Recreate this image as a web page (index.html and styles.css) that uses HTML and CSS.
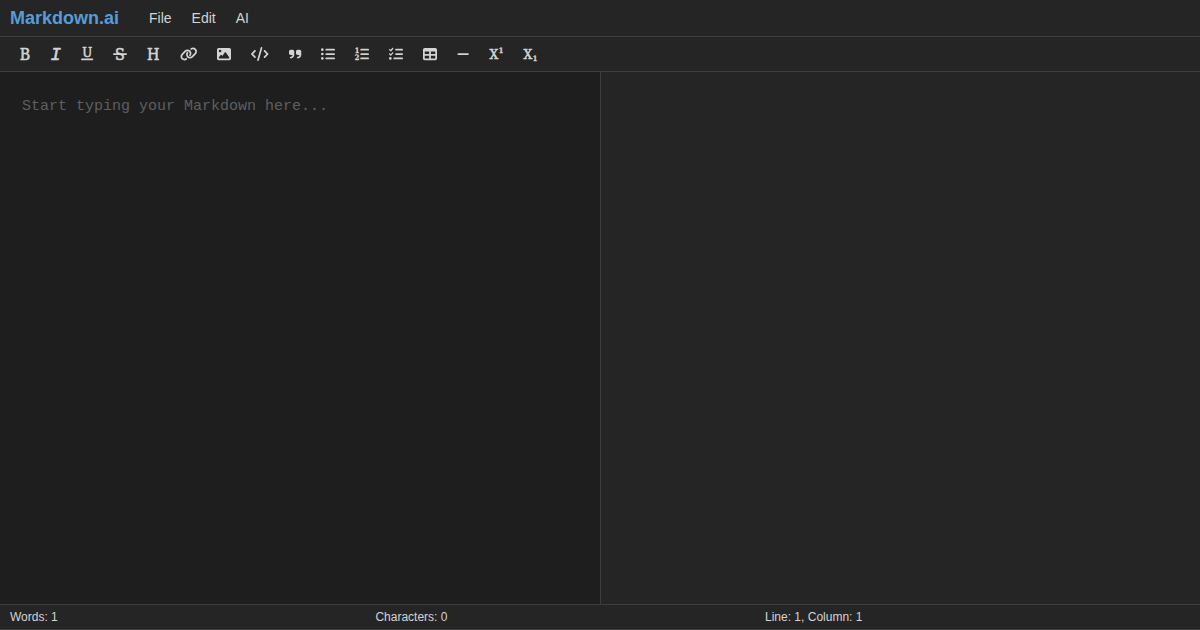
FILE: index.html
```html
<!DOCTYPE html>
<html lang="en">
<head>
    <meta charset="UTF-8">
    <meta name="viewport" content="width=device-width, initial-scale=1.0">
    <title>Markdown.ai</title>
    <link rel="stylesheet" href="styles.css">
</head>
<body>
    <header class="menu-bar">
        <div class="logo">Markdown.ai</div>
        <nav class="menu">
            <button type="button">File</button>
            <button type="button">Edit</button>
            <button type="button">AI</button>
        </nav>
    </header>

    <div class="toolbar" role="toolbar" aria-label="Formatting">
        <button type="button" title="Bold">
            <svg viewBox="0 0 384 512"><text x="186" y="464" font-size="580">B</text></svg>
        </button>
        <button type="button" title="Italic">
            <svg viewBox="0 0 384 512"><text class="italic" x="176" y="464" font-size="640">I</text></svg>
        </button>
        <button type="button" title="Underline">
            <svg viewBox="0 0 448 512"><text x="224" y="360" font-size="480">U</text><rect y="416" width="448" height="64" rx="32"/></svg>
        </button>
        <button type="button" title="Strikethrough">
            <svg viewBox="0 0 512 512"><text x="256" y="464" font-size="580">S</text><rect y="224" width="512" height="64" rx="32"/></svg>
        </button>
        <button type="button" title="Heading">
            <svg viewBox="0 0 448 512"><text x="224" y="464" font-size="580">H</text></svg>
        </button>
        <button type="button" title="Link">
            <svg viewBox="0 0 640 512"><path d="M579.8 267.7c56.5-56.5 56.5-148 0-204.5c-50-50-128.8-56.5-186.3-15.4l-1.6 1.1c-14.4 10.3-17.7 30.3-7.4 44.6s30.3 17.7 44.6 7.4l1.6-1.1c32.1-22.9 76-19.3 103.8 8.6c31.5 31.5 31.5 82.5 0 114L422.3 334.8c-31.5 31.5-82.5 31.5-114 0c-27.9-27.9-31.5-71.8-8.6-103.8l1.1-1.6c10.3-14.4 6.9-34.4-7.4-44.6s-34.4-6.9-44.6 7.4l-1.1 1.6C206.5 251.2 213 330 263 380c56.5 56.5 148 56.5 204.5 0L579.8 267.7zM60.2 244.3c-56.5 56.5-56.5 148 0 204.5c50 50 128.8 56.5 186.3 15.4l1.6-1.1c14.4-10.3 17.7-30.3 7.4-44.6s-30.3-17.7-44.6-7.4l-1.6 1.1c-32.1 22.9-76 19.3-103.8-8.6C74 372 74 321 105.5 289.5L217.7 177.2c31.5-31.5 82.5-31.5 114 0c27.9 27.9 31.5 71.8 8.6 103.9l-1.1 1.6c-10.3 14.4-6.9 34.4 7.4 44.6s34.4 6.9 44.6-7.4l1.1-1.6C433.5 260.8 427 182 377 132c-56.5-56.5-148-56.5-204.5 0L60.2 244.3z"/></svg>
        </button>
        <button type="button" title="Image">
            <svg viewBox="0 0 512 512"><path d="M0 96C0 60.7 28.7 32 64 32l384 0c35.3 0 64 28.7 64 64l0 320c0 35.3-28.7 64-64 64L64 480c-35.3 0-64-28.7-64-64L0 96zM323.8 202.5c-4.5-6.6-11.9-10.5-19.8-10.5s-15.4 3.9-19.8 10.5l-87 127.6L170.7 297c-4.6-5.7-11.5-9-18.7-9s-14.2 3.3-18.7 9l-64 80c-5.8 7.2-6.9 17.1-2.9 25.4s12.4 13.6 21.6 13.6l96 0 32 0 208 0c8.9 0 17.1-4.9 21.2-12.8s3.6-17.4-1.4-24.7l-120-176zM112 192a48 48 0 1 0 0-96 48 48 0 1 0 0 96z"/></svg>
        </button>
        <button type="button" title="Code">
            <svg viewBox="0 0 640 512"><path d="M392.8 1.2c-17-4.9-34.7 5-39.6 22l-128 448c-4.9 17 5 34.7 22 39.6s34.7-5 39.6-22l128-448c4.9-17-5-34.7-22-39.6zm80.6 120.1c-12.5 12.5-12.5 32.8 0 45.3L562.7 256l-89.4 89.4c-12.5 12.5-12.5 32.8 0 45.3s32.8 12.5 45.3 0l112-112c12.5-12.5 12.5-32.8 0-45.3l-112-112c-12.5-12.5-32.8-12.5-45.3 0zm-306.7 0c-12.5-12.5-32.8-12.5-45.3 0l-112 112c-12.5 12.5-12.5 32.8 0 45.3l112 112c12.5 12.5 32.8 12.5 45.3 0s12.5-32.8 0-45.3L77.3 256l89.4-89.4c12.5-12.5 12.5-32.8 0-45.3z"/></svg>
        </button>
        <button type="button" title="Quote">
            <svg viewBox="0 0 448 512"><path d="M448 296c0 66.3-53.7 120-120 120l-8 0c-17.7 0-32-14.3-32-32s14.3-32 32-32l8 0c30.9 0 56-25.1 56-56l0-8-64 0c-35.3 0-64-28.7-64-64l0-64c0-35.3 28.7-64 64-64l64 0c35.3 0 64 28.7 64 64l0 136zM192 296c0 66.3-53.7 120-120 120l-8 0c-17.7 0-32-14.3-32-32s14.3-32 32-32l8 0c30.9 0 56-25.1 56-56l0-8-64 0c-35.3 0-64-28.7-64-64l0-64c0-35.3 28.7-64 64-64l64 0c35.3 0 64 28.7 64 64l0 136z"/></svg>
        </button>
        <button type="button" title="Bulleted list">
            <svg viewBox="0 0 512 512"><circle cx="48" cy="96" r="48"/><circle cx="48" cy="256" r="48"/><circle cx="48" cy="416" r="48"/><rect x="160" y="64" width="352" height="64" rx="32"/><rect x="160" y="224" width="352" height="64" rx="32"/><rect x="160" y="384" width="352" height="64" rx="32"/></svg>
        </button>
        <button type="button" title="Numbered list">
            <svg viewBox="0 0 512 512"><text class="digit" x="72" y="212" font-size="270">1</text><text class="digit" x="72" y="476" font-size="270">2</text><rect x="192" y="64" width="320" height="64" rx="32"/><rect x="192" y="224" width="320" height="64" rx="32"/><rect x="192" y="384" width="320" height="64" rx="32"/></svg>
        </button>
        <button type="button" title="Task list">
            <svg viewBox="0 0 512 512"><path d="M152.1 38.2c9.9 8.9 10.7 24 1.8 33.9l-72 80c-4.4 4.9-10.6 7.8-17.2 7.9s-12.9-2.4-17.6-7L7 113C-2.3 103.6-2.3 88.4 7 79s24.6-9.4 33.9 0l22.1 22.1 55.1-61.2c8.9-9.9 24-10.7 33.9-1.8zm0 160c9.9 8.9 10.7 24 1.8 33.9l-72 80c-4.4 4.9-10.6 7.8-17.2 7.9s-12.9-2.4-17.6-7L7 273c-9.4-9.4-9.4-24.6 0-33.9s24.6-9.4 33.9 0l22.1 22.1 55.1-61.2c8.9-9.9 24-10.7 33.9-1.8z"/><circle cx="48" cy="416" r="48"/><rect x="224" y="64" width="288" height="64" rx="32"/><rect x="224" y="224" width="288" height="64" rx="32"/><rect x="160" y="384" width="352" height="64" rx="32"/></svg>
        </button>
        <button type="button" title="Table">
            <svg viewBox="0 0 512 512"><path fill-rule="evenodd" d="M64 256l0-96 160 0 0 96L64 256zm0 64l160 0 0 96L64 416l0-96zm224 96l0-96 160 0 0 96-160 0zM448 256l-160 0 0-96 160 0 0 96zM64 32C28.7 32 0 60.7 0 96L0 416c0 35.3 28.7 64 64 64l384 0c35.3 0 64-28.7 64-64l0-320c0-35.3-28.7-64-64-64L64 32z"/></svg>
        </button>
        <button type="button" title="Horizontal rule">
            <svg viewBox="0 0 448 512"><rect x="16" y="224" width="416" height="64" rx="32"/></svg>
        </button>
        <button type="button" title="Superscript">
            <svg viewBox="0 0 512 512"><text x="176" y="432" font-size="500">X</text><text class="digit" x="440" y="208" font-size="270">1</text></svg>
        </button>
        <button type="button" title="Subscript">
            <svg viewBox="0 0 512 512"><text x="176" y="432" font-size="500">X</text><text class="digit" x="440" y="496" font-size="270">1</text></svg>
        </button>
    </div>

    <main class="workspace">
        <textarea class="editor" aria-label="Markdown editor" placeholder="Start typing your Markdown here..." spellcheck="false"></textarea>
        <section class="preview" aria-label="Preview"></section>
    </main>

    <footer class="status-bar">
        <span>Words: 1</span>
        <span>Characters: 0</span>
        <span>Line: 1, Column: 1</span>
        <span class="save-status"></span>
    </footer>
</body>
</html>
```
FILE: styles.css
```css
* {
    box-sizing: border-box;
}
body {
    margin: 0;
    height: 100vh;
    display: flex;
    flex-direction: column;
    background: #1e1e1e;
    color: #d4d4d4;
    font-family: "Liberation Sans", Arial, sans-serif;
}
button {
    background: none;
    border: none;
    color: inherit;
    font-family: inherit;
    cursor: pointer;
}
.menu-bar {
    display: flex;
    align-items: center;
    gap: 20px;
    padding: 8px 10px;
    background: #252525;
    border-bottom: 1px solid #3e3e3e;
}
.logo {
    font-size: 18px;
    line-height: 20px;
    font-weight: bold;
    color: #569cd6;
}
.menu {
    display: flex;
}
.menu button {
    padding: 0 10px;
    font-size: 14px;
    line-height: 20px;
}
.toolbar {
    display: flex;
    align-items: center;
    padding: 5px 10px;
    background: #252525;
    border-bottom: 1px solid #3e3e3e;
}
.toolbar button {
    padding: 5px 10px;
}
.toolbar button:hover {
    background: #3e3e3e;
}
.toolbar svg {
    display: block;
    height: 14px;
    fill: currentColor;
    overflow: visible;
}
.toolbar text {
    font-family: "DejaVu Serif Condensed", "DejaVu Serif", serif;
    text-anchor: middle;
    stroke: currentColor;
    stroke-width: 20px;
    stroke-linejoin: round;
}
.toolbar .italic {
    font-family: "Liberation Mono", monospace;
    font-style: italic;
}
.toolbar .digit {
    font-weight: bold;
    stroke-width: 10px;
}
.workspace {
    flex: 1;
    display: flex;
    min-height: 0;
}
.editor {
    width: 50%;
    padding: 22px;
    border: none;
    outline: none;
    resize: none;
    background: #1e1e1e;
    color: #d4d4d4;
    font-family: Courier, "Liberation Mono", monospace;
    font-size: 15px;
    line-height: 25px;
}
.editor::placeholder {
    color: #5f5f5f;
}
.preview {
    width: 50%;
    padding: 20px;
    overflow: auto;
    background: #252525;
    border-left: 1px solid #3e3e3e;
}
.status-bar {
    display: flex;
    justify-content: space-between;
    padding: 5px 10px;
    background: #252525;
    border-top: 1px solid #3e3e3e;
    border-bottom: 1px solid #3e3e3e;
    font-size: 12px;
    line-height: 14px;
}
.save-status {
    padding: 0 5px;
}
```
